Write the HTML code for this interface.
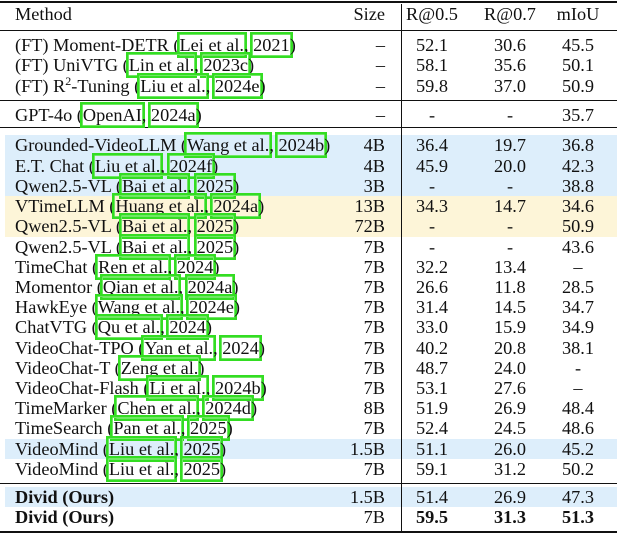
<!DOCTYPE html>
<html><head><meta charset="utf-8"><style>
body{margin:0;width:617px;height:536px;background:#fff;position:relative;overflow:hidden;font-family:"Liberation Serif",serif;font-size:18.3px;color:#111}
.r{position:absolute;left:0;width:617px;height:20px;line-height:20px}
.m{position:absolute;left:15px;white-space:nowrap}
.s{position:absolute;right:232px}
.a,.b,.c{position:absolute;width:80px;text-align:center}
.a{left:392px}.b{left:470px}.c{left:538px}
.g{box-shadow:0 0 0 0.5px rgba(255,255,255,0.6),0 0 0 3px #33dd22;}
.bg{position:absolute;left:5px;right:0}
.blue{background:#ddeefb}.yel{background:#fdf5d8}
.h{position:absolute;left:0;width:617px;background:#111}
.v{position:absolute;left:401px;width:1px;background:#111}
b{font-weight:bold}
</style></head><body>
<div class="bg blue" style="top:135px;height:61px"></div>
<div class="bg yel" style="top:196px;height:41px"></div>
<div class="bg blue" style="top:439px;height:20px"></div>
<div class="bg blue" style="top:487px;height:20px"></div>
<div class="h" style="top:1px;height:2px"></div>
<div class="h" style="top:30px;height:1px"></div>
<div class="h" style="top:100px;height:1px"></div>
<div class="h" style="top:127px;height:1px"></div>
<div class="h" style="top:483px;height:1px"></div>
<div class="h" style="top:531px;height:2px"></div>
<div class="v" style="top:4px;height:26px"></div>
<div class="v" style="top:31px;height:69px"></div>
<div class="v" style="top:101px;height:26px"></div>
<div class="v" style="top:128px;height:355px"></div>
<div class="v" style="top:484px;height:47px"></div>

<div class="r" style="top:4px"><span class="m">Method</span><span class="s">Size</span><span class="a">R@0.5</span><span class="b">R@0.7</span><span class="c">mIoU</span></div>
<div class="r" style="top:35px"><span class="m">(FT) Moment-DETR (<span class="g">Lei et al.</span>, <span class="g">2021</span>)</span><span class="s">–</span><span class="a">52.1</span><span class="b">30.6</span><span class="c">45.5</span></div>
<div class="r" style="top:55px"><span class="m">(FT) UniVTG (<span class="g">Lin et al.</span>, <span class="g">2023c</span>)</span><span class="s">–</span><span class="a">58.1</span><span class="b">35.6</span><span class="c">50.1</span></div>
<div class="r" style="top:76px"><span class="m">(FT) R<sup style="font-size:12px;line-height:0">2</sup>-Tuning (<span class="g">Liu et al.</span>, <span class="g">2024e</span>)</span><span class="s">–</span><span class="a">59.8</span><span class="b">37.0</span><span class="c">50.9</span></div>
<div class="r" style="top:105px"><span class="m">GPT-4o (<span class="g">OpenAI</span>, <span class="g">2024a</span>)</span><span class="s">–</span><span class="a">-</span><span class="b">-</span><span class="c">35.7</span></div>
<div class="r" style="top:135px"><span class="m">Grounded-VideoLLM (<span class="g">Wang et al.</span>, <span class="g">2024b</span>)</span><span class="s">4B</span><span class="a">36.4</span><span class="b">19.7</span><span class="c">36.8</span></div>
<div class="r" style="top:156px"><span class="m">E.T. Chat (<span class="g">Liu et al.</span>, <span class="g">2024f</span>)</span><span class="s">4B</span><span class="a">45.9</span><span class="b">20.0</span><span class="c">42.3</span></div>
<div class="r" style="top:176px"><span class="m">Qwen2.5-VL (<span class="g">Bai et al.</span>, <span class="g">2025</span>)</span><span class="s">3B</span><span class="a">-</span><span class="b">-</span><span class="c">38.8</span></div>
<div class="r" style="top:196px"><span class="m">VTimeLLM (<span class="g">Huang et al.</span>, <span class="g">2024a</span>)</span><span class="s">13B</span><span class="a">34.3</span><span class="b">14.7</span><span class="c">34.6</span></div>
<div class="r" style="top:216px"><span class="m">Qwen2.5-VL (<span class="g">Bai et al.</span>, <span class="g">2025</span>)</span><span class="s">72B</span><span class="a">-</span><span class="b">-</span><span class="c">50.9</span></div>
<div class="r" style="top:237px"><span class="m">Qwen2.5-VL (<span class="g">Bai et al.</span>, <span class="g">2025</span>)</span><span class="s">7B</span><span class="a">-</span><span class="b">-</span><span class="c">43.6</span></div>
<div class="r" style="top:257px"><span class="m">TimeChat (<span class="g">Ren et al.</span>, <span class="g">2024</span>)</span><span class="s">7B</span><span class="a">32.2</span><span class="b">13.4</span><span class="c">–</span></div>
<div class="r" style="top:277px"><span class="m">Momentor (<span class="g">Qian et al.</span>, <span class="g">2024a</span>)</span><span class="s">7B</span><span class="a">26.6</span><span class="b">11.8</span><span class="c">28.5</span></div>
<div class="r" style="top:297px"><span class="m">HawkEye (<span class="g">Wang et al.</span>, <span class="g">2024e</span>)</span><span class="s">7B</span><span class="a">31.4</span><span class="b">14.5</span><span class="c">34.7</span></div>
<div class="r" style="top:317px"><span class="m">ChatVTG (<span class="g">Qu et al.</span>, <span class="g">2024</span>)</span><span class="s">7B</span><span class="a">33.0</span><span class="b">15.9</span><span class="c">34.9</span></div>
<div class="r" style="top:338px"><span class="m">VideoChat-TPO (<span class="g">Yan et al.</span>, <span class="g">2024</span>)</span><span class="s">7B</span><span class="a">40.2</span><span class="b">20.8</span><span class="c">38.1</span></div>
<div class="r" style="top:358px"><span class="m">VideoChat-T (<span class="g">Zeng et al.</span>)</span><span class="s">7B</span><span class="a">48.7</span><span class="b">24.0</span><span class="c">-</span></div>
<div class="r" style="top:378px"><span class="m">VideoChat-Flash (<span class="g">Li et al.</span>, <span class="g">2024b</span>)</span><span class="s">7B</span><span class="a">53.1</span><span class="b">27.6</span><span class="c">–</span></div>
<div class="r" style="top:398px"><span class="m">TimeMarker (<span class="g">Chen et al.</span>, <span class="g">2024d</span>)</span><span class="s">8B</span><span class="a">51.9</span><span class="b">26.9</span><span class="c">48.4</span></div>
<div class="r" style="top:418px"><span class="m">TimeSearch (<span class="g">Pan et al.</span>, <span class="g">2025</span>)</span><span class="s">7B</span><span class="a">52.4</span><span class="b">24.5</span><span class="c">48.6</span></div>
<div class="r" style="top:439px"><span class="m">VideoMind (<span class="g">Liu et al.</span>, <span class="g">2025</span>)</span><span class="s">1.5B</span><span class="a">51.1</span><span class="b">26.0</span><span class="c">45.2</span></div>
<div class="r" style="top:459px"><span class="m">VideoMind (<span class="g">Liu et al.</span>, <span class="g">2025</span>)</span><span class="s">7B</span><span class="a">59.1</span><span class="b">31.2</span><span class="c">50.2</span></div>
<div class="r" style="top:487px"><span class="m"><b>Divid (Ours)</b></span><span class="s">1.5B</span><span class="a">51.4</span><span class="b">26.9</span><span class="c">47.3</span></div>
<div class="r" style="top:507px"><span class="m"><b>Divid (Ours)</b></span><span class="s">7B</span><span class="a"><b>59.5</b></span><span class="b"><b>31.3</b></span><span class="c"><b>51.3</b></span></div>
</body></html>
